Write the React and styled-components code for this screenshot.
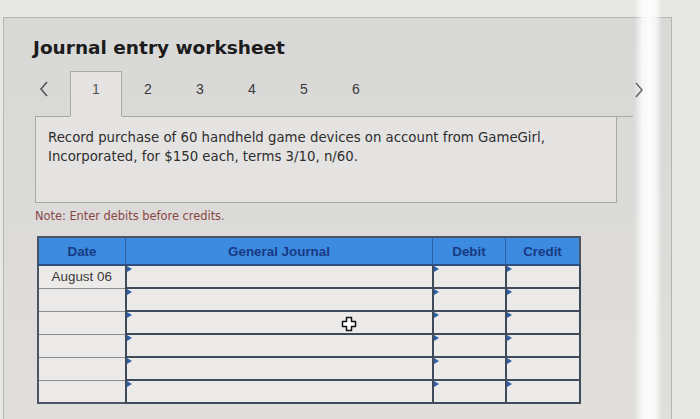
import React from "react";
import styled, { createGlobalStyle } from "styled-components";

const GlobalStyle = createGlobalStyle`
  html, body {
    margin: 0;
    padding: 0;
    background: #e7e7e5;
    overflow: hidden;
  }
`;

const Page = styled.div`
  position: relative;
  width: 700px;
  height: 419px;
  padding: 17px 0 0 3px;
  box-sizing: border-box;
  overflow: hidden;
`;

const Panel = styled.div`
  width: 669px;
  height: 420px;
  box-sizing: border-box;
  background: linear-gradient(180deg, #d8d8d7 0%, #dcdbd9 50%, #e0dfdc 100%);
  border: 1px solid #b4b4b2;
  border-bottom: none;
  padding: 19px 0 0 29px;
`;

const Title = styled.h1`
  margin: 0;
  font-family: "DejaVu Sans", Verdana, sans-serif;
  font-weight: bold;
  font-size: 18.5px;
  color: #1c1c1c;
`;

const TabBar = styled.div`
  display: flex;
  align-items: stretch;
  height: 45px;
  margin: 13px 0 0 2px;
  width: 598px;
  border-bottom: 1px solid #a9a9a7;
  font-family: "Liberation Sans", Arial, sans-serif;
  font-size: 14px;
  color: #444;
`;

const Arrow = styled.div`
  width: 35px;
  display: flex;
  align-items: flex-start;
  padding: 10px 0 0 4px;
  box-sizing: border-box;
  svg { display: block; }
`;

const Tab = styled.div`
  width: 52px;
  box-sizing: border-box;
  display: flex;
  align-items: flex-start;
  justify-content: center;
  padding-top: 9px;
  margin-bottom: -1px;
  background: ${(p) => (p.$active ? "#e4e3e1" : "transparent")};
  border: 1px solid ${(p) => (p.$active ? "#a9a9a7" : "transparent")};
  border-bottom: 1px solid ${(p) => (p.$active ? "#e4e3e1" : "transparent")};
  color: ${(p) => (p.$active ? "#555" : "#3a3a3a")};
`;

const NextArrow = styled.div`
  position: absolute;
  left: 634px;
  top: 82px;
  z-index: 2;
  svg { display: block; }
`;

const Prompt = styled.div`
  width: 582px;
  height: 86px;
  margin-left: 2px;
  box-sizing: border-box;
  background: #e4e3e1;
  border: 1px solid #a9a9a7;
  border-top: none;
  padding: 11px 12px 0 12px;
  font-family: "DejaVu Sans", Verdana, sans-serif;
  font-size: 13.3px;
  line-height: 19px;
  color: #2e2e2e;
`;

const Note = styled.p`
  margin: 6px 0 0 2px;
  font-family: "DejaVu Sans", Verdana, sans-serif;
  font-size: 11.4px;
  color: #8a4545;
`;

const Table = styled.table`
  margin: 13px 0 0 4px;
  border-collapse: collapse;
  table-layout: fixed;
  font-family: "Liberation Sans", Arial, sans-serif;
  font-size: 13.4px;
  border: 2px solid #4a5462;
`;

const Head = styled.th`
  height: 26px;
  padding: 0;
  background: #3d8be0;
  color: #173a84;
  font-weight: bold;
  border: 1px solid #2e5f9e;
  border-bottom: 2px solid #2e4f7e;
  text-align: center;
  width: ${(p) => p.$w}px;
`;

const DateCell = styled.td`
  height: 21px;
  padding: 0;
  background: #ebeae8;
  border: 1px solid #8e8e8e;
  text-align: center;
  color: #3a3a3a;
`;

const InputCell = styled.td`
  position: relative;
  height: 21px;
  padding: 0;
  background: #ebeae8;
  border: 2px solid #3f4b5b;

  &::before {
    content: "";
    position: absolute;
    left: 0;
    top: 0;
    border-left: 5px solid #2d5fa6;
    border-top: 3px solid transparent;
    border-bottom: 3px solid transparent;
  }
`;

const Cursor = styled.svg`
  position: absolute;
  left: 341px;
  top: 316px;
`;

const Glare = styled.div`
  position: absolute;
  left: 634px;
  top: 0;
  width: 28px;
  height: 419px;
  z-index: 1;
  background: linear-gradient(
    90deg,
    rgba(255, 255, 255, 0) 0%,
    rgba(255, 255, 255, 0.8) 30%,
    rgba(255, 255, 255, 0.92) 55%,
    rgba(255, 255, 255, 0.75) 78%,
    rgba(255, 255, 255, 0) 100%
  );
  pointer-events: none;
`;

const rows = ["August 06", "", "", "", "", ""];

export default function App() {
  return (
    <>
      <GlobalStyle />
      <Page>
        <Panel>
          <Title>Journal entry worksheet</Title>
          <TabBar>
            <Arrow>
              <svg width="10" height="16" viewBox="0 0 10 16">
                <path d="M8 1 L2 8 L8 15" fill="none" stroke="#555" strokeWidth="1.6" />
              </svg>
            </Arrow>
            {[1, 2, 3, 4, 5, 6].map((n) => (
              <Tab key={n} $active={n === 1}>
                {n}
              </Tab>
            ))}
          </TabBar>
          <Prompt>
            Record purchase of 60 handheld game devices on account from GameGirl,
            <br />
            Incorporated, for $150 each, terms 3/10, n/60.
          </Prompt>
          <Note>Note: Enter debits before credits.</Note>
          <Table>
            <thead>
              <tr>
                <Head $w={86}>Date</Head>
                <Head $w={306}>General Journal</Head>
                <Head $w={72}>Debit</Head>
                <Head $w={73}>Credit</Head>
              </tr>
            </thead>
            <tbody>
              {rows.map((d, i) => (
                <tr key={i}>
                  <DateCell>{d}</DateCell>
                  <InputCell />
                  <InputCell />
                  <InputCell />
                </tr>
              ))}
            </tbody>
          </Table>
        </Panel>
        <Glare />
        <NextArrow>
          <svg width="10" height="16" viewBox="0 0 10 16">
            <path d="M2 1 L8 8 L2 15" fill="none" stroke="#666" strokeWidth="1.5" />
          </svg>
        </NextArrow>
        <Cursor width="16" height="16" viewBox="0 0 16 16">
          <path
            d="M5.5 1.5 H10.5 V5.5 H14.5 V10.5 H10.5 V14.5 H5.5 V10.5 H1.5 V5.5 H5.5 Z"
            fill="#fff"
            stroke="#111"
            strokeWidth="1.5"
            strokeLinejoin="round"
          />
        </Cursor>
      </Page>
    </>
  );
}
